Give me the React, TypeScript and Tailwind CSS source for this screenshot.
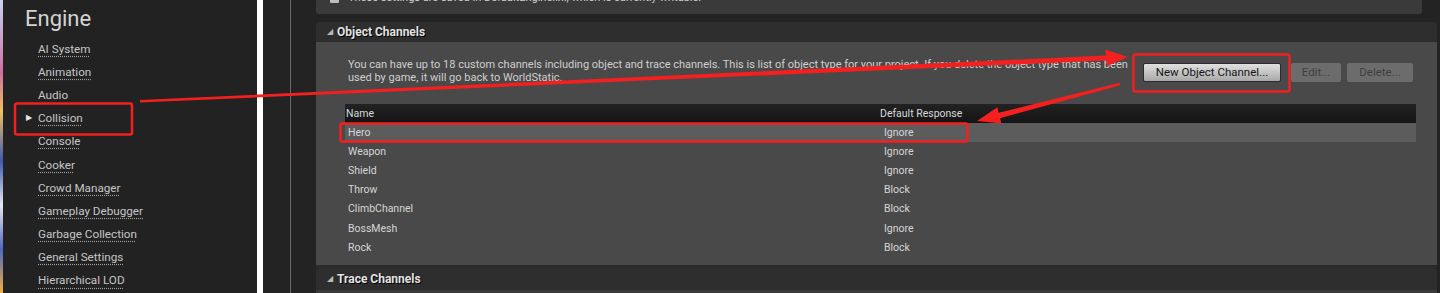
import { Fragment } from "react"

const FONT = "font-['Roboto','Liberation_Sans',sans-serif]"

const SECTIONS = [
  { label: "AI System", underline: true },
  { label: "Animation", underline: true },
  { label: "Audio", underline: false },
  { label: "Collision", underline: true, active: true },
  { label: "Console", underline: true },
  { label: "Cooker", underline: true },
  { label: "Crowd Manager", underline: true },
  { label: "Gameplay Debugger", underline: true },
  { label: "Garbage Collection", underline: true },
  { label: "General Settings", underline: true },
  { label: "Hierarchical LOD", underline: true },
]

const CHANNELS = [
  { name: "Hero", response: "Ignore", selected: true },
  { name: "Weapon", response: "Ignore" },
  { name: "Shield", response: "Ignore" },
  { name: "Throw", response: "Block" },
  { name: "ClimbChannel", response: "Block" },
  { name: "BossMesh", response: "Ignore" },
  { name: "Rock", response: "Block" },
]

function Sidebar() {
  return (
    <div className="w-[254px] shrink-0 bg-[#222222] pt-[5px]">
      <div className="pl-[22px] text-[22px] leading-[28px] text-[#d4d4d4]">Engine</div>
      <div className="mt-[4px] pl-[35px]">
        {SECTIONS.map((s) => (
          <div key={s.label} className="flex h-[23.2px] items-center">
            {s.active && <span className="-ml-[12px] w-[12px] text-[8px] text-[#e6e6e6]">▶</span>}
            <span
              className={
                "text-[11.7px] leading-[14px] text-[#c6c6c6] " +
                (s.underline ? "underline decoration-dotted decoration-[#a0a0a0] underline-offset-[3px]" : "")
              }
            >
              {s.label}
            </span>
          </div>
        ))}
      </div>
    </div>
  )
}

function SectionHeader({ title, height }: { title: string; height: string }) {
  return (
    <div className={`${height} flex items-center gap-[4px] rounded-t-[3px] bg-[#2e2e2e] pl-[11px]`}>
      <span className="text-[8px] leading-none text-[#b8b8b8]">◢</span>
      <span className="text-[12px] font-bold text-[#e2e2e2] [text-shadow:1px_1px_0_#000]">{title}</span>
    </div>
  )
}

function ObjectChannels() {
  return (
    <div className="mr-[3px]">
      <SectionHeader title="Object Channels" height="h-[20px]" />
      <div className="h-[223px] bg-[#494949] pl-[29px] pr-[21px]">
        <div className="flex justify-between pt-[16px]">
          <p className="whitespace-nowrap pl-[3px] text-[11px] leading-[13px] text-[#cfcfcf]">
            You can have up to 18 custom channels including object and trace channels. This is list of object type for your project. If you delete the object type that has been
            <br />
            used by game, it will go back to WorldStatic.
          </p>
          <div className="mr-[3px] mt-[5px] flex shrink-0">
            <button className="h-[19px] w-[138px] rounded-[2px] border border-[#2b2b2b] bg-[linear-gradient(#e0e0e0,#a8a8a8)] text-[11.5px] text-[#151515]">
              New Object Channel...
            </button>
            <button className="ml-[10px] h-[19px] w-[50px] rounded-[2px] bg-[#6c6c6c] text-[11.5px] text-[#404040]">Edit...</button>
            <button className="ml-[6px] h-[19px] w-[66px] rounded-[2px] bg-[#6c6c6c] text-[11.5px] text-[#404040]">Delete...</button>
          </div>
        </div>

        <div className="mt-[20px] grid grid-cols-[533px_1fr] text-[10.5px] text-[#d6d6d6]">
          <div className="flex h-[19px] items-center bg-[linear-gradient(#222222,#141414)] pl-[1px] text-[#d8d8d8]">Name</div>
          <div className="flex h-[19px] items-center bg-[linear-gradient(#222222,#141414)] pl-[2px] text-[#d8d8d8]">Default Response</div>
          {CHANNELS.map((c) => (
            <Fragment key={c.name}>
              <div className={`flex h-[19.2px] items-center pl-[3px] ${c.selected ? "bg-[#5c5c5c]" : ""}`}>{c.name}</div>
              <div className={`flex h-[19.2px] items-center pl-[6px] ${c.selected ? "bg-[#5c5c5c]" : ""}`}>{c.response}</div>
            </Fragment>
          ))}
        </div>
      </div>
      <div className="h-[3px] bg-[#2a2a2a]" />
      <SectionHeader title="Trace Channels" height="h-[22px]" />
      <div className="h-[10px] bg-[#393939]" />
    </div>
  )
}

function Annotations() {
  return (
    <svg className="pointer-events-none absolute inset-0" width="1440" height="293" viewBox="0 0 1440 293">
      <g fill="none" stroke="#f41f1f" strokeWidth="2.5">
        <rect x="15" y="103.5" width="117" height="31" rx="2" />
        <rect x="1133.5" y="54.5" width="156" height="37" rx="2" />
        <rect x="340.5" y="123.5" width="627" height="18" rx="1.5" />
      </g>
      <g fill="#f41f1f">
        <polygon points="140,100 1106,55.5 1105,49.5 1128,57 1107,66 1106,60.5 140,102.5" />
        <polygon points="1119.6,82.8 998.7,112.8 997.3,107.3 977,121 1001.5,123.6 1000,118.2 1120.4,85.2" />
      </g>
    </svg>
  )
}

export default function App() {
  return (
    <div className={`relative flex h-[293px] w-[1440px] overflow-hidden bg-[#232323] ${FONT}`}>
      <div className="w-[3px] shrink-0 bg-[linear-gradient(#c8d4f0_0%,#d070a0_25%,#f0c060_38%,#4058b0_55%,#e8e8f0_70%,#5068c0_85%,#f0b040_100%)]" />
      <Sidebar />
      <div className="w-[6px] shrink-0 bg-white" />
      <div className="w-[27px] shrink-0" />
      <div className="w-[1px] shrink-0 bg-[#6a6a6a]" />
      <div className="w-[25px] shrink-0" />

      <div className="flex min-w-0 flex-1 flex-col">
        <div className="mr-[18px] h-[14px] shrink-0 overflow-hidden rounded-b-[3px] bg-[#3a3a3a]">
          <div className="-mt-[9px] flex h-[14px] items-center gap-[9px] pl-[14px]">
            <span className="h-[10px] w-[9px] rounded-[1px] bg-[#bdbdbd]" />
            <span className="text-[11px] text-[#cfcfcf]">
              These settings are saved in DefaultEngine.ini, which is currently writable.
            </span>
          </div>
        </div>
        <div className="h-[8px] shrink-0" />
        <ObjectChannels />
      </div>

      <Annotations />
    </div>
  )
}
